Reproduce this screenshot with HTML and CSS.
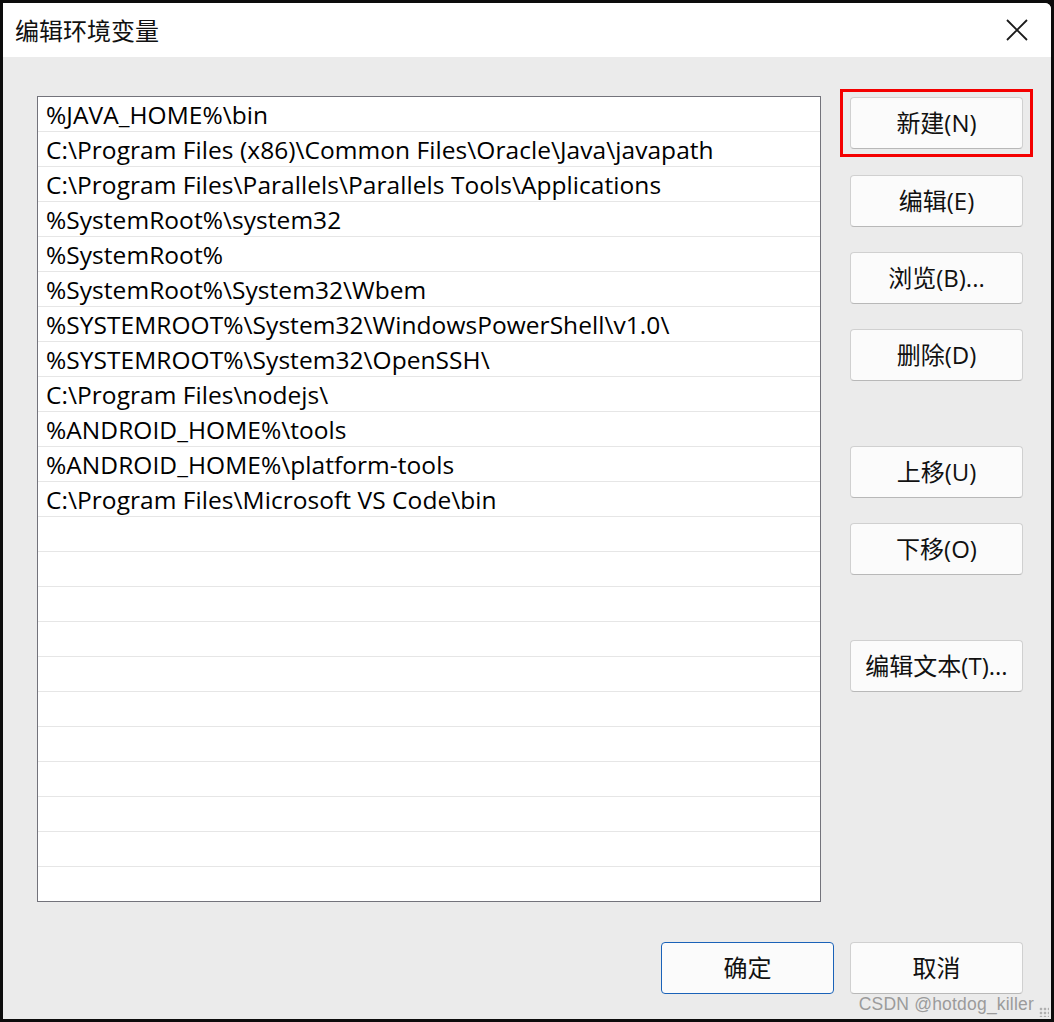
FILE: index.html
```html
<!DOCTYPE html>
<html lang="zh-CN">
<head>
<meta charset="utf-8">
<title>编辑环境变量</title>
<link rel="stylesheet" href="styles.css">
</head>
<body>
<div class="dialog">
  <div class="titlebar">
    <span class="title">编辑环境变量</span>
    <span class="close" aria-label="关闭">
      <svg width="22" height="22" viewBox="0 0 22 22"><path d="M1 1L21 21M21 1L1 21" stroke="#1a1a1a" stroke-width="1.8" fill="none"/></svg>
    </span>
  </div>
  <div class="content">
    <div class="main">
      <ul class="list">
        <li>%JAVA_HOME%\bin</li>
        <li>C:\Program Files (x86)\Common Files\Oracle\Java\javapath</li>
        <li>C:\Program Files\Parallels\Parallels Tools\Applications</li>
        <li>%SystemRoot%\system32</li>
        <li>%SystemRoot%</li>
        <li>%SystemRoot%\System32\Wbem</li>
        <li>%SYSTEMROOT%\System32\WindowsPowerShell\v1.0\</li>
        <li>%SYSTEMROOT%\System32\OpenSSH\</li>
        <li>C:\Program Files\nodejs\</li>
        <li>%ANDROID_HOME%\tools</li>
        <li>%ANDROID_HOME%\platform-tools</li>
        <li>C:\Program Files\Microsoft VS Code\bin</li>
        <li></li><li></li><li></li><li></li><li></li><li></li><li></li><li></li><li></li><li></li><li></li>
      </ul>
      <div class="side">
        <div class="highlight"><button class="btn">新建(N)</button></div>
        <button class="btn">编辑(E)</button>
        <button class="btn">浏览(B)...</button>
        <button class="btn">删除(D)</button>
        <button class="btn gap-lg">上移(U)</button>
        <button class="btn">下移(O)</button>
        <button class="btn gap-lg">编辑文本(T)...</button>
      </div>
    </div>
    <div class="footer">
      <button class="btn primary">确定</button>
      <button class="btn">取消</button>
    </div>
    <div class="watermark">CSDN @hotdog_killer</div>
    <div class="grip"></div>
  </div>
</div>
</body>
</html>
```
FILE: styles.css
```css
html, body {
  margin: 0;
  padding: 0;
  background: #0c0c0c;
}
body {
  width: 1054px;
  height: 1022px;
  overflow: hidden;
  font-family: "Open Sans", "Noto Sans CJK SC", sans-serif;
  color: #000;
}
.dialog {
  margin: 3px;
  width: 1048px;
  height: 1016px;
  display: flex;
  flex-direction: column;
  background: #ebebeb;
  border-top-right-radius: 6px;
  overflow: hidden;
}
.titlebar {
  height: 54px;
  background: #fff;
  display: flex;
  align-items: center;
  justify-content: space-between;
  padding: 0 23px 0 12px;
  flex: none;
}
.title {
  font-family: "Noto Sans CJK SC", sans-serif;
  font-size: 24px;
  color: #111;
  position: relative;
  top: -1px;
}
.close {
  display: flex;
  width: 22px;
  height: 22px;
}
.content {
  position: relative;
  flex: 1;
  padding: 39px 0 0 34px;
}
.main {
  display: flex;
  align-items: flex-start;
  gap: 29px;
}
.list {
  list-style: none;
  margin: 0;
  padding: 0;
  width: 782px;
  height: 804px;
  border: 1px solid #73737b;
  background: #fff;
  overflow: hidden;
}
.list li {
  height: 34px;
  line-height: 36px;
  border-bottom: 1px solid #e6e6e6;
  padding-left: 8px;
  font-size: 24.5px;
  white-space: nowrap;
  letter-spacing: 0.05px;
}
.list li:last-child {
  border-bottom: none;
}
.side {
  display: flex;
  flex-direction: column;
  gap: 25px;
  padding-top: 1px;
}
.highlight {
  margin: -8px -10px 0;
  padding: 5px 7px 5px 7px;
  border: 3px solid #f40000;
  width: 173px;
}
.btn {
  width: 173px;
  height: 52px;
  box-sizing: border-box;
  background: #fbfbfb;
  border: 1px solid #d0d0d0;
  border-bottom-color: #b8b8b8;
  border-radius: 4px;
  font-family: "Open Sans", "Noto Sans CJK SC", sans-serif;
  font-size: 24px;
  color: #111;
  padding: 0;
  display: block;
  line-height: 1;
}
.highlight + .btn {
  margin-top: -7px;
}
.gap-lg {
  margin-top: 40px;
}
.footer {
  display: flex;
  justify-content: flex-end;
  gap: 16px;
  margin-top: 40px;
  padding-right: 28px;
}
.btn.primary {
  border: 1px solid #1a62b8;
  border-bottom-color: #1a62b8;
}
.watermark {
  position: absolute;
  right: 17px;
  bottom: 4px;
  font-family: "Liberation Sans", sans-serif;
  font-size: 17.5px;
  color: #9b9b9b;
  letter-spacing: 0.2px;
}
.grip {
  position: absolute;
  right: 2px;
  bottom: 2px;
  width: 10px;
  height: 10px;
  background:
    radial-gradient(circle, #b0b0b0 1.5px, transparent 1.6px) 0 0 / 4px 4px;
}
```
